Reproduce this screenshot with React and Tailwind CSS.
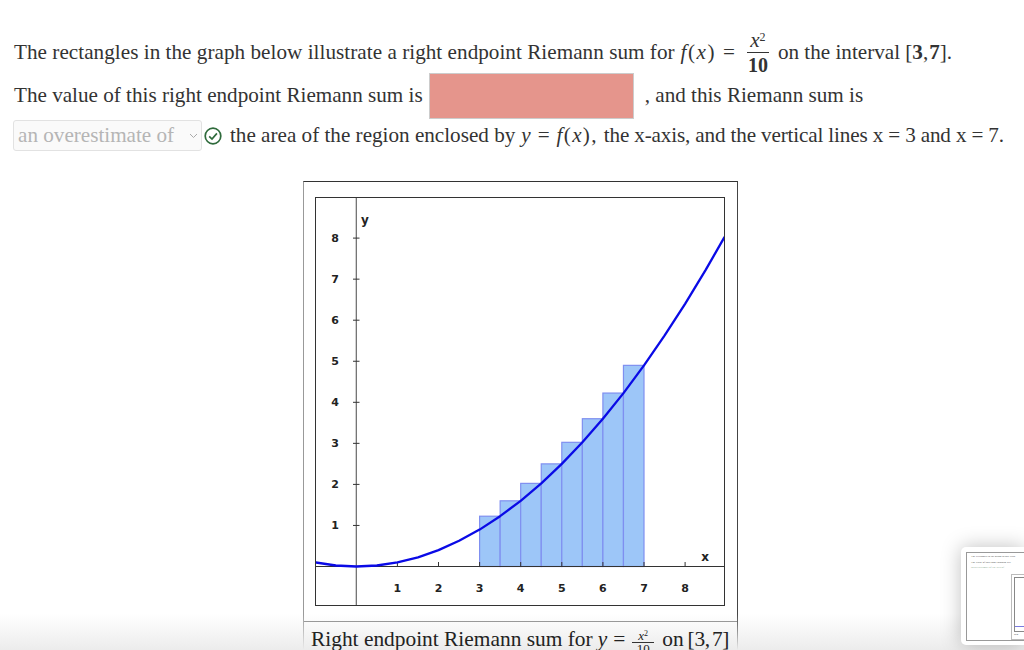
import React from "react";

const serif = "font-['Liberation_Serif',serif]";
const xToPx = (x) => 356.3 + x * 41.1 - 316;
const yToPx = (y) => 566.5 - y * 41.05 - 198;

// the plot is sampled coarsely, so the curve shows slight corners
const curve = [];
for (let x = -1; x <= 8.96; x += 0.5) {
  curve.push(`${xToPx(x).toFixed(1)},${yToPx((x * x) / 10).toFixed(1)}`);
}
curve.push(`${xToPx(8.96).toFixed(1)},${yToPx(8.03).toFixed(1)}`);
const rects = [3.5, 4, 4.5, 5, 5.5, 6, 6.5, 7];

const Var = ({ children }) => <i className="italic">{children}</i>;

function Graph() {
  return (
    <svg width="408" height="407" viewBox="0 0 408 407" className="block">
      {rects.map((r) => (
        <rect
          key={r}
          x={xToPx(r - 0.5)}
          y={yToPx((r * r) / 10)}
          width={20.55}
          height={yToPx(0) - yToPx((r * r) / 10)}
          fill="#9dc6f8"
          stroke="#7f8ff0"
          strokeWidth="1.2"
        />
      ))}
      <line x1="40.3" y1="0" x2="40.3" y2="407" stroke="#666" strokeWidth="1.2" />
      <line x1="0" y1="368.5" x2="408" y2="368.5" stroke="#333" strokeWidth="1.2" />
      {[1, 2, 3, 4, 5, 6, 7, 8].map((n) => (
        <g key={n} fontFamily="'DejaVu Sans', sans-serif" fontWeight="700" fontSize="11" fill="#222">
          <line x1={xToPx(n)} y1="364" x2={xToPx(n)} y2="368.5" stroke="#333" />
          <text x={xToPx(n)} y="394" textAnchor="middle">{n}</text>
          <line x1="37" y1={yToPx(n)} x2="43.5" y2={yToPx(n)} stroke="#333" />
          <text x="19" y={yToPx(n) + 4} textAnchor="middle">{n}</text>
        </g>
      ))}
      <text x="49" y="26" textAnchor="middle" fontFamily="'DejaVu Sans', sans-serif" fontWeight="700" fontSize="12" fill="#222">y</text>
      <text x="389" y="363" textAnchor="middle" fontFamily="'DejaVu Sans', sans-serif" fontWeight="700" fontSize="12" fill="#222">x</text>
      <polyline points={curve.join(" ")} fill="none" stroke="#0a0ae6" strokeWidth="2.3" strokeLinejoin="round" />
    </svg>
  );
}

function CheckIcon() {
  return (
    <svg width="18" height="18" viewBox="0 0 18 18" className="shrink-0">
      <circle cx="9" cy="9" r="7.8" fill="none" stroke="#2f6b3c" strokeWidth="1.7" />
      <path d="M5.2 9.3 L8 12 L12.9 6.4" fill="none" stroke="#2f6b3c" strokeWidth="1.7" />
    </svg>
  );
}

function Question() {
  return (
    <div className={`${serif} text-[21.15px] text-[#333] whitespace-nowrap`}>
      <div className="flex items-center h-[53px] pt-[12px]">
        <span className="tracking-[0.04px]">The rectangles in the graph below illustrate a right endpoint Riemann sum for</span>
        <span className="ml-[6px] tracking-[1.5px]"><Var>f</Var>(<Var>x</Var>)</span>
        <span className="ml-[7px]">=</span>
        <span className="ml-[12px] inline-flex flex-col items-center w-[22px] leading-[24px]">
          <span className="w-full text-center border-b border-[#333]"><Var>x</Var><sup className="text-[12px]">2</sup></span>
          <span className="font-bold text-[20px]">10</span>
        </span>
        <span className="ml-[9px]">on the interval [<b>3</b>,<b className="ml-[1px]">7</b>].</span>
      </div>
      <div className="flex items-center h-[46px]">
        <span>The value of this right endpoint Riemann sum is</span>
        <div className="w-[205px] h-[46px] ml-[6px] mr-[11px] bg-[#e5958c] border border-[#ccc]" />
        <span>, and this Riemann sum is</span>
      </div>
      <div className="flex items-center h-[31px] mt-[1px]">
        <div className="flex items-center justify-between w-[189px] h-[31px] -ml-[1px] pl-[4px] pr-[3px] bg-[#fafafa] border border-[#e2e2e2] rounded-[3px] text-[#b5b5b5]">
          <span>an overestimate of</span>
          <svg width="9" height="6" viewBox="0 0 9 6">
            <path d="M1 1 L4.5 4.5 L8 1" fill="none" stroke="#aaa" strokeWidth="1" />
          </svg>
        </div>
        <span className="ml-[2px] mr-[8px] flex"><CheckIcon /></span>
        <span>the area of the region enclosed by</span>
        <span className="ml-[6px]"><Var>y</Var></span>
        <span className="ml-[7px]">=</span>
        <span className="ml-[7px] tracking-[1.3px]"><Var>f</Var>(<Var>x</Var>),</span>
        <span className="ml-[6px] tracking-[-0.15px]">the x-axis, and the vertical lines x = 3 and x = 7.</span>
      </div>
    </div>
  );
}

function Figure() {
  return (
    <div className="w-[435px] mt-[30px] ml-[289px] border border-t-[#333] border-r-[#444] border-l-[#999] border-b-0 bg-white">
      <div className="pt-[15px] pb-[15px] pl-[11px]">
        <div className="w-[410px] border border-[#333]">
          <Graph />
        </div>
      </div>
      <div className={`${serif} relative z-10 flex items-center h-[32px] pl-[7px] pt-[4px] border-t border-[#999] text-[21.4px] text-[#222] whitespace-nowrap`}>
        <span>Right endpoint Riemann sum for</span>
        <span className="ml-[5px]"><Var>y</Var></span>
        <span className="ml-[6px]">=</span>
        <span className="ml-[7px] mt-[6px] inline-flex flex-col items-center w-[22px] text-[13px] leading-[12px]">
          <span className="w-full text-center border-b border-[#333]"><Var>x</Var><sup className="text-[8px]">2</sup></span>
          <span>10</span>
        </span>
        <span className="ml-[8px]">on</span>
        <span className="ml-[4px] tracking-[-0.3px]">[3,<span className="ml-[2px]">7</span>]</span>
      </div>
    </div>
  );
}

function Thumbnail() {
  return (
    <div className="absolute z-20 left-[961px] top-[547px] w-[63px] h-[98px] bg-white rounded-l-[5px] shadow-[0_0_20px_rgba(0,0,0,0.25)] pl-[5px] pt-[5px] pb-[4px]">
      <div className={`${serif} h-full border-l border-t border-b border-[#999] pl-[4px] pt-[1px] text-[#444] text-[2.8px] leading-[5.5px] whitespace-nowrap`}>
        <div>The rectangles in the graph below illust</div>
        <div>The value of this right endpoint Rie</div>
        <div className="text-[#8aa98e]">an overestimate of the area of</div>
        <div className="h-[66px] mt-[3px] ml-[40px] border-l border-t border-b border-[#bbb] pl-[2px] pt-[2px]">
          <div className="flex flex-col justify-end h-[55px] border-l border-t border-b border-[#888] pb-[4px]">
            <div className="h-[1px] bg-[#7a7ae0]" />
          </div>
          <div className="text-[#333]">Rig</div>
        </div>
      </div>
    </div>
  );
}

export default function App() {
  return (
    <div className="relative w-[1024px] h-[650px] overflow-hidden bg-white pl-[14px] pt-[20px]">
      <Question />
      <Figure />
      <div className="absolute left-0 right-0 bottom-0 h-[36px] bg-gradient-to-b from-transparent to-[#ececec] pointer-events-none" />
      <Thumbnail />
    </div>
  );
}
